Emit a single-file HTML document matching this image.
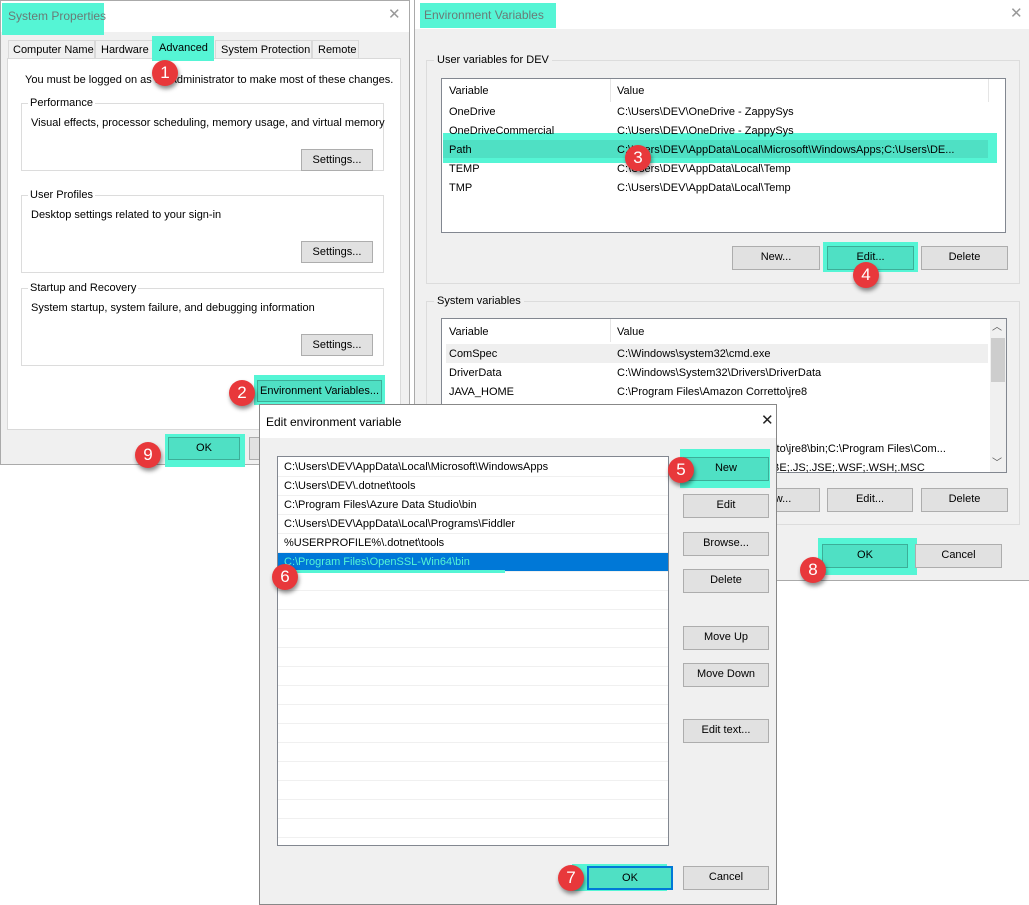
<!DOCTYPE html>
<html><head><meta charset="utf-8"><style>
*{box-sizing:border-box;margin:0;padding:0}
body{width:1029px;height:905px;position:relative;background:#fff;font-family:"Liberation Sans",sans-serif;font-size:11px;color:#000;overflow:hidden}
.a{position:absolute}
.t{position:absolute;white-space:nowrap;line-height:14px}
.btn{position:absolute;background:#e1e1e1;border:1px solid #adadad;text-align:center;line-height:21px;white-space:nowrap}
.cy{position:absolute;background:#55f5d5}
.cb{background:#4fe0c4;border-color:#3cae98}
.grp{position:absolute;border:1px solid #dcdcdc}
.lg{position:absolute;background:#f0f0f0;padding:0 3px;line-height:14px;white-space:nowrap}
.list{position:absolute;background:#fff;border:1px solid #828790}
.bad{position:absolute;width:26px;height:26px;border-radius:50%;background:#e8383b;color:#fff;font-size:17px;text-align:center;line-height:26px;box-shadow:1px 3px 4px rgba(0,0,0,.45)}
.row{position:absolute;left:0;right:0;height:19px;border-bottom:1px solid #f0f0f0;padding-left:6px;line-height:18px;white-space:nowrap}
.x{position:absolute;font-size:15px;color:#999;line-height:16px}
</style></head><body>

<!-- System Properties -->
<div class="a" style="left:0;top:0;width:410px;height:465px;background:#f0f0f0;border:1px solid #aaa"></div>
<div class="a" style="left:1px;top:1px;width:408px;height:31px;background:#fff"></div>
<div class="cy" style="left:2px;top:3px;width:102px;height:32px"></div>
<div class="t" style="left:8px;top:9px;font-size:12px;color:#6a7a76">System Properties</div>
<div class="x" style="left:388px;top:7px">✕</div>
<div class="a" style="left:7px;top:58px;width:394px;height:372px;background:#fff;border:1px solid #d9d9d9"></div>
<div class="a" style="left:8px;top:40px;width:87px;height:19px;border:1px solid #d9d9d9;background:#f0f0f0"></div><div class="t" style="left:13px;top:43px">Computer Name</div>
<div class="a" style="left:95px;top:40px;width:58px;height:19px;border:1px solid #d9d9d9;background:#f0f0f0"></div><div class="t" style="left:101px;top:43px">Hardware</div>
<div class="cy" style="left:152px;top:36px;width:62px;height:25px"></div><div class="t" style="left:159px;top:41px">Advanced</div>
<div class="a" style="left:215px;top:40px;width:97px;height:19px;border:1px solid #d9d9d9;background:#f0f0f0"></div><div class="t" style="left:221px;top:43px">System Protection</div>
<div class="a" style="left:312px;top:40px;width:47px;height:19px;border:1px solid #d9d9d9;background:#f0f0f0"></div><div class="t" style="left:318px;top:43px">Remote</div>
<div class="t" style="left:25px;top:73px">You must be logged on as an Administrator to make most of these changes.</div>
<div class="grp" style="left:21px;top:103px;width:363px;height:68px"></div><div class="t" style="left:28px;top:96px;background:#fff;padding:0 2px">Performance</div>
<div class="t" style="left:31px;top:116px">Visual effects, processor scheduling, memory usage, and virtual memory</div>
<div class="btn" style="left:301px;top:149px;width:72px;height:22px">Settings...</div>
<div class="grp" style="left:21px;top:195px;width:363px;height:78px"></div><div class="t" style="left:28px;top:188px;background:#fff;padding:0 2px">User Profiles</div>
<div class="t" style="left:31px;top:208px">Desktop settings related to your sign-in</div>
<div class="btn" style="left:301px;top:241px;width:72px;height:22px">Settings...</div>
<div class="grp" style="left:21px;top:288px;width:363px;height:78px"></div><div class="t" style="left:28px;top:281px;background:#fff;padding:0 2px">Startup and Recovery</div>
<div class="t" style="left:31px;top:301px">System startup, system failure, and debugging information</div>
<div class="btn" style="left:301px;top:334px;width:72px;height:22px">Settings...</div>
<div class="cy" style="left:254px;top:375px;width:131px;height:30px"></div>
<div class="btn cb" style="left:257px;top:380px;width:125px;height:22px">Environment Variables...</div>
<div class="cy" style="left:165px;top:434px;width:80px;height:33px"></div>
<div class="btn cb" style="left:168px;top:437px;width:72px;height:23px">OK</div>
<div class="btn" style="left:249px;top:437px;width:20px;height:23px"></div>

<!-- Environment Variables -->
<div class="a" style="left:414px;top:0;width:615px;height:581px;background:#f0f0f0;border-left:1px solid #aaa;border-bottom:1px solid #aaa"></div>
<div class="a" style="left:415px;top:0;width:614px;height:29px;background:#fff"></div>
<div class="cy" style="left:420px;top:3px;width:136px;height:25px"></div>
<div class="t" style="left:424px;top:8px;font-size:12px;color:#6a7a76">Environment Variables</div>
<div class="x" style="left:1010px;top:6px">✕</div>
<div class="grp" style="left:426px;top:60px;width:594px;height:224px"></div><div class="lg" style="left:434px;top:53px">User variables for DEV</div>
<div class="list" style="left:441px;top:78px;width:565px;height:155px">
 <div class="a" style="left:168px;top:0;width:1px;height:23px;background:#e5e5e5"></div>
 <div class="a" style="left:546px;top:0;width:1px;height:23px;background:#e5e5e5"></div>
 <div class="t" style="left:7px;top:5px">Variable</div><div class="t" style="left:175px;top:5px">Value</div>
</div>
<div class="cy" style="left:443px;top:133px;width:554px;height:30px"></div>
<div class="a" style="left:443px;top:140px;width:545px;height:18px;background:#4fe0c4"></div>
<div class="t" style="left:449px;top:105px">OneDrive</div><div class="t" style="left:617px;top:105px">C:\Users\DEV\OneDrive - ZappySys</div>
<div class="t" style="left:449px;top:124px">OneDriveCommercial</div><div class="t" style="left:617px;top:124px">C:\Users\DEV\OneDrive - ZappySys</div>
<div class="t" style="left:449px;top:143px">Path</div><div class="t" style="left:617px;top:143px">C:\Users\DEV\AppData\Local\Microsoft\WindowsApps;C:\Users\DE...</div>
<div class="t" style="left:449px;top:162px">TEMP</div><div class="t" style="left:617px;top:162px">C:\Users\DEV\AppData\Local\Temp</div>
<div class="t" style="left:449px;top:181px">TMP</div><div class="t" style="left:617px;top:181px">C:\Users\DEV\AppData\Local\Temp</div>
<div class="btn" style="left:732px;top:246px;width:88px;height:24px">New...</div>
<div class="cy" style="left:823px;top:242px;width:95px;height:30px"></div>
<div class="btn cb" style="left:827px;top:246px;width:87px;height:24px">Edit...</div>
<div class="btn" style="left:921px;top:246px;width:87px;height:24px">Delete</div>

<div class="grp" style="left:426px;top:301px;width:594px;height:224px"></div><div class="lg" style="left:434px;top:294px">System variables</div>
<div class="list" style="left:441px;top:318px;width:566px;height:155px">
 <div class="a" style="left:168px;top:0;width:1px;height:23px;background:#e5e5e5"></div>
 <div class="t" style="left:7px;top:6px">Variable</div><div class="t" style="left:175px;top:6px">Value</div>
 <div class="a" style="left:4px;top:25px;width:542px;height:19px;background:#efefef"></div>
 <div class="a" style="left:548px;top:0;width:16px;height:153px;background:#f0f0f0"></div>
 <div class="a" style="left:549px;top:19px;width:14px;height:44px;background:#cdcdcd"></div>
 <div class="t" style="left:550px;top:2px;font-size:10px;color:#555">︿</div>
 <div class="t" style="left:550px;top:138px;font-size:10px;color:#555">﹀</div>
</div>
<div class="t" style="left:449px;top:347px">ComSpec</div><div class="t" style="left:617px;top:347px">C:\Windows\system32\cmd.exe</div>
<div class="t" style="left:449px;top:366px">DriverData</div><div class="t" style="left:617px;top:366px">C:\Windows\System32\Drivers\DriverData</div>
<div class="t" style="left:449px;top:385px">JAVA_HOME</div><div class="t" style="left:617px;top:385px">C:\Program Files\Amazon Corretto\jre8</div>
<div class="t" style="left:617px;top:442px">C:\Program Files\Amazon Corretto\jre8\bin;C:\Program Files\Com...</div>
<div class="t" style="left:617px;top:461px">.COM;.EXE;.BAT;.CMD;.VBS;.VBE;.JS;.JSE;.WSF;.WSH;.MSC</div>
<div class="btn" style="left:732px;top:488px;width:88px;height:24px">New...</div>
<div class="btn" style="left:827px;top:488px;width:86px;height:24px">Edit...</div>
<div class="btn" style="left:921px;top:488px;width:87px;height:24px">Delete</div>
<div class="cy" style="left:818px;top:538px;width:99px;height:37px"></div>
<div class="btn cb" style="left:822px;top:544px;width:86px;height:24px">OK</div>
<div class="btn" style="left:915px;top:544px;width:87px;height:24px">Cancel</div>

<!-- Edit environment variable -->
<div class="a" style="left:259px;top:404px;width:518px;height:501px;background:#f0f0f0;border:1px solid #888"></div>
<div class="a" style="left:260px;top:405px;width:516px;height:33px;background:#fff"></div>
<div class="t" style="left:266px;top:415px;font-size:12px">Edit environment variable</div>
<div class="x" style="left:761px;top:413px;color:#222">✕</div>
<div class="list" style="left:277px;top:456px;width:392px;height:390px;overflow:hidden">
 <div class="row" style="top:1px">C:\Users\DEV\AppData\Local\Microsoft\WindowsApps</div>
 <div class="row" style="top:20px">C:\Users\DEV\.dotnet\tools</div>
 <div class="row" style="top:39px">C:\Program Files\Azure Data Studio\bin</div>
 <div class="row" style="top:58px">C:\Users\DEV\AppData\Local\Programs\Fiddler</div>
 <div class="row" style="top:77px">%USERPROFILE%\.dotnet\tools</div>
 <div class="row" style="top:96px;background:#0078d7;color:#55f5d5">C:\Program Files\OpenSSL-Win64\bin</div>
 <div class="row" style="top:115px"></div><div class="row" style="top:134px"></div><div class="row" style="top:153px"></div><div class="row" style="top:172px"></div><div class="row" style="top:191px"></div><div class="row" style="top:210px"></div><div class="row" style="top:229px"></div><div class="row" style="top:248px"></div><div class="row" style="top:267px"></div><div class="row" style="top:286px"></div><div class="row" style="top:305px"></div><div class="row" style="top:324px"></div><div class="row" style="top:343px"></div><div class="row" style="top:362px"></div>
</div>
<div class="a" style="left:282px;top:570px;width:223px;height:3px;background:#55f5d5"></div>
<div class="cy" style="left:680px;top:449px;width:90px;height:39px"></div>
<div class="btn cb" style="left:683px;top:457px;width:86px;height:24px">New</div>
<div class="btn" style="left:683px;top:494px;width:86px;height:24px">Edit</div>
<div class="btn" style="left:683px;top:532px;width:86px;height:24px">Browse...</div>
<div class="btn" style="left:683px;top:569px;width:86px;height:24px">Delete</div>
<div class="btn" style="left:683px;top:626px;width:86px;height:24px">Move Up</div>
<div class="btn" style="left:683px;top:663px;width:86px;height:24px">Move Down</div>
<div class="btn" style="left:683px;top:719px;width:86px;height:24px">Edit text...</div>
<div class="cy" style="left:572px;top:864px;width:95px;height:27px"></div>
<div class="btn cb" style="left:587px;top:866px;width:86px;height:24px;border:2px solid #0078d7;line-height:20px">OK</div>
<div class="btn" style="left:683px;top:866px;width:86px;height:24px">Cancel</div>

<!-- badges -->
<div class="bad" style="left:152px;top:60px">1</div>
<div class="bad" style="left:229px;top:380px">2</div>
<div class="bad" style="left:625px;top:145px">3</div>
<div class="bad" style="left:853px;top:262px">4</div>
<div class="bad" style="left:668px;top:457px">5</div>
<div class="bad" style="left:272px;top:564px">6</div>
<div class="bad" style="left:558px;top:865px">7</div>
<div class="bad" style="left:800px;top:557px">8</div>
<div class="bad" style="left:135px;top:442px">9</div>
</body></html>
